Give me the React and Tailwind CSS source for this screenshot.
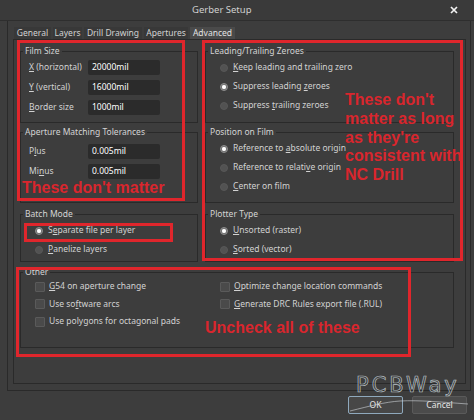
import React from "react";

function U({ children }) {
  return <span className="underline underline-offset-[1px]">{children}</span>;
}

function Radio({ checked, children }) {
  return (
    <div className="flex h-[19px] items-center gap-[5px]">
      <span
        className={
          checked
            ? "flex h-[8px] w-[8px] items-center justify-center rounded-full border border-[#8c8c8c] bg-[#4a4a4a]"
            : "flex h-[8px] w-[8px] items-center justify-center rounded-full border border-[#585858] bg-[#525252]"
        }
      >
        {checked && <span className="h-[4px] w-[4px] rounded-full bg-white shadow-[0_0_2px_#fff]" />}
      </span>
      <span>{children}</span>
    </div>
  );
}

function Check({ children }) {
  return (
    <div className="flex h-[17.5px] items-center gap-[4px]">
      <span className="h-[10px] w-[10px] rounded-[1px] border border-[#5a5a5a] bg-[#4a4a4a]" />
      <span>{children}</span>
    </div>
  );
}

function Field({ label, value }) {
  return (
    <div className="flex h-[20px] items-center">
      <span className="w-[59px]">{label}</span>
      <div className="flex h-[15px] w-[72px] items-center rounded-[2px] bg-[#2b2b2b] pl-[4px] text-white">
        {value}
      </div>
    </div>
  );
}

// fieldset-style group box, padding goes on the inner div so the legend stays put
function Group({ title, className, inner, children }) {
  return (
    <fieldset className={"border border-[#2a2a2a] " + className}>
      <legend className="ml-[2px] px-[2px] leading-[12px] text-[#d4d4d4]">{title}</legend>
      <div className={inner}>{children}</div>
    </fieldset>
  );
}

const tabs = [
  { name: "General", w: "w-[37px]" },
  { name: "Layers", w: "w-[29px]" },
  { name: "Drill Drawing", w: "w-[58px]" },
  { name: "Apertures", w: "w-[44px]" },
  { name: "Advanced", w: "w-[45px]" },
];

export default function App() {
  return (
    <div className="relative h-[420px] w-[474px] overflow-hidden bg-[#3d3d3d] font-['Noto_Sans',sans-serif] text-[8.5px] text-[#d2d2d2]">
      {/* title bar */}
      <div className="flex h-[21px] items-center border-b border-[#2e2e2e] bg-[#3a3a3a]">
        <span className="ml-[192px] text-[9.5px] text-[#d0d0d0]">Gerber Setup</span>
        <svg className="ml-auto mr-[16px]" width="8" height="8" viewBox="0 0 8 8">
          <path d="M1 1L7 7M7 1L1 7" stroke="#f2f2f2" strokeWidth="1.7" />
        </svg>
      </div>

      {/* frame */}
      <div className="ml-[7px] h-[370px] w-[464px] border-x border-b border-[#2a2a2a] px-[5px] pt-[6px]">
        <div className="ml-[1px] flex h-[12px] gap-[2px]">
          {tabs.map((t) => (
            <div
              key={t.name}
              className={
                t.name === "Advanced"
                  ? "flex items-center justify-center bg-[#4a4a4a] text-[#e2e2e2] " + t.w
                  : "flex items-center justify-center bg-[#383838] " + t.w
              }
            >
              {t.name}
            </div>
          ))}
        </div>

        <div className="h-[345px] w-[453px] border border-[#2a2a2a] pl-[6px] pt-[5px]">
          <div className="flex gap-[7px]">
            {/* left column */}
            <div className="flex w-[178px] flex-col">
              <Group title="Film Size" className="h-[78px]" inner="pl-[8px]">
                <Field label={<><U>X</U> (horizontal)</>} value="20000mil" />
                <Field label={<><U>Y</U> (vertical)</>} value="16000mil" />
                <Field label={<><U>B</U>order size</>} value="1000mil" />
              </Group>
              <Group title="Aperture Matching Tolerances" className="mt-[3px] h-[77px]" inner="pl-[8px] pt-[3px]">
                <Field label={<>P<U>l</U>us</>} value="0.005mil" />
                <Field label={<>Mi<U>n</U>us</>} value="0.005mil" />
              </Group>
              <Group title="Batch Mode" className="mt-[5px] h-[54px]" inner="pl-[14px] pt-[1px]">
                <Radio checked>
                  S<U>e</U>parate file per layer
                </Radio>
                <Radio>
                  <U>P</U>anelize layers
                </Radio>
              </Group>
            </div>

            {/* right column */}
            <div className="flex w-[249px] flex-col">
              <Group title="Leading/Trailing Zeroes" className="h-[78px]" inner="pl-[14px] pt-[1px]">
                <Radio>
                  <U>K</U>eep leading and trailing zero
                </Radio>
                <Radio checked>
                  Suppress leading <U>z</U>eroes
                </Radio>
                <Radio>
                  Suppress <U>t</U>railing zeroes
                </Radio>
              </Group>
              <Group title="Position on Film" className="mt-[3px] h-[77px]" inner="pl-[14px] pt-[1px]">
                <Radio checked>
                  Reference to <U>a</U>bsolute origin
                </Radio>
                <Radio>
                  Reference to relati<U>v</U>e origin
                </Radio>
                <Radio>
                  <U>C</U>enter on film
                </Radio>
              </Group>
              <Group title="Plotter Type" className="mt-[5px] h-[54px]" inner="pl-[14px] pt-[1px]">
                <Radio checked>
                  <U>U</U>nsorted (raster)
                </Radio>
                <Radio>
                  <U>S</U>orted (vector)
                </Radio>
              </Group>
            </div>
          </div>

          <Group title="Other" className="mt-[4px] h-[82px] w-[434px]" inner="grid grid-cols-[185px_1fr] pl-[14px]">
            <Check>
              <U>G</U>54 on aperture change
            </Check>
            <Check>
              <U>O</U>ptimize change location commands
            </Check>
            <Check>
              Use so<U>f</U>tware arcs
            </Check>
            <Check>
              <U>G</U>enerate DRC Rules export file (.RUL)
            </Check>
            <Check>Use polygons for octagonal pads</Check>
          </Group>
        </div>
      </div>

      {/* buttons */}
      <div className="mr-[7px] mt-[5px] flex justify-end gap-[9px]">
        <button className="flex h-[18px] w-[55px] items-center justify-center rounded-[2px] border border-[#8fa9bd] bg-[#474747] text-[8.5px] text-[#e6e6e6]">
          OK
        </button>
        <button className="flex h-[18px] w-[55px] items-center justify-center rounded-[2px] border border-[#5a5a5a] bg-[#4b4b4b] text-[8.5px] text-[#e6e6e6]">
          Cancel
        </button>
      </div>

      {/* annotations */}
      <div className="pointer-events-none absolute left-[17px] top-[40px] h-[161px] w-[168px] border-[3px] border-[#e0262c]" />
      <div className="pointer-events-none absolute left-[202px] top-[40px] h-[221px] w-[261px] border-[3px] border-[#e0262c]" />
      <div className="pointer-events-none absolute left-[24px] top-[223px] h-[19px] w-[149px] border-[3px] border-[#e0262c]" />
      <div className="pointer-events-none absolute left-[16px] top-[267px] h-[90px] w-[395px] border-[3px] border-[#e0262c]" />

      <div className="absolute left-[22px] top-[178px] font-['Liberation_Sans',Arial,sans-serif] text-[16px] font-bold leading-[19px] text-[#d9262d]">
        These don't matter
      </div>
      <div className="absolute left-[345px] top-[91px] w-[120px] font-['Liberation_Sans',Arial,sans-serif] text-[16px] font-bold leading-[18.8px] text-[#d9262d]">
        These don't matter as long as they're consistent with NC Drill
      </div>
      <div className="absolute left-[205px] top-[318px] font-['Liberation_Sans',Arial,sans-serif] text-[16px] font-bold leading-[19px] text-[#d9262d]">
        Uncheck all of these
      </div>

      {/* watermark */}
      <div className="pointer-events-none absolute left-[356px] top-[374px] font-['DejaVu_Sans',sans-serif] text-[21px] leading-[22px] tracking-[3px] text-transparent [-webkit-text-stroke:0.7px_#b8c0c6]">
        PCBWay
      </div>
      <svg className="pointer-events-none absolute left-0 top-0" width="474" height="420">
        <path d="M350 411 C370 406 385 402 400 401 C420 400 440 402 468 404" stroke="#c8cdd2" strokeWidth="0.8" fill="none" opacity="0.8" />
      </svg>
    </div>
  );
}
